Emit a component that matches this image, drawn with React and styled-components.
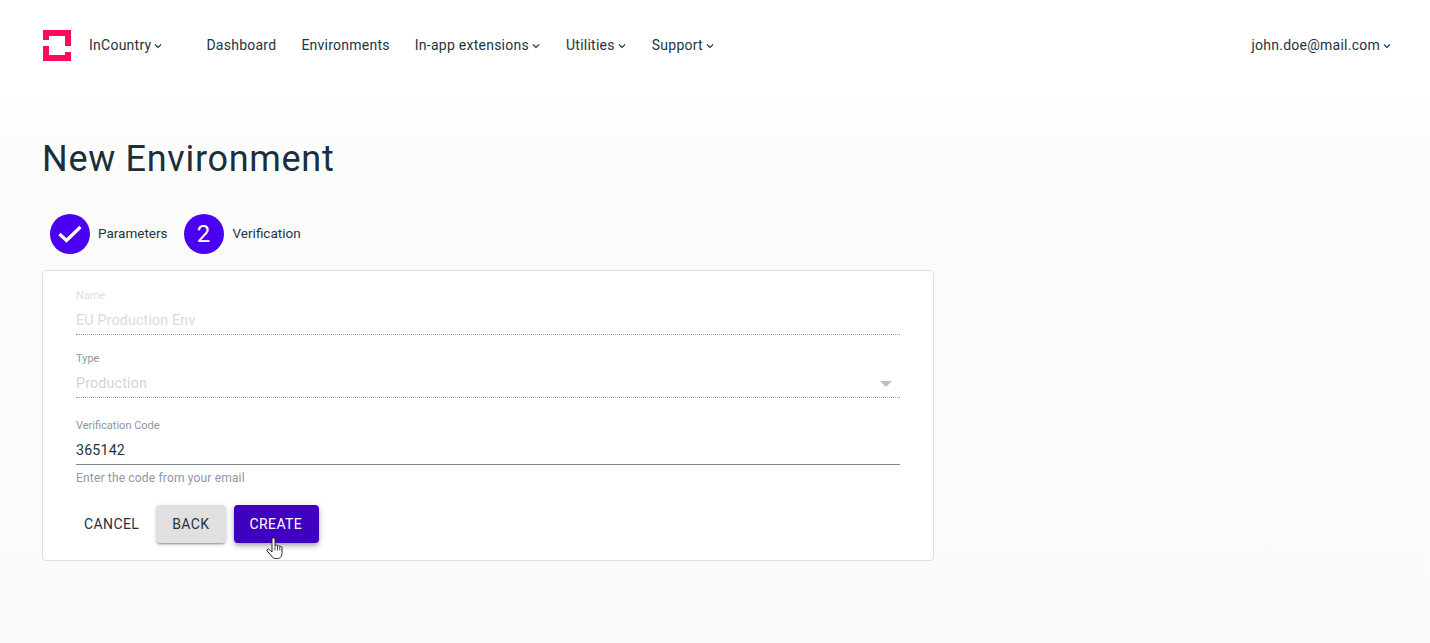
import React from "react";
import styled, { createGlobalStyle } from "styled-components";

const Global = createGlobalStyle`
  html, body { margin: 0; padding: 0; }
  body {
    font-family: Roboto, "Liberation Sans", sans-serif;
    color: #1f3340;
    background: #fafaf9;
  }
`;
const Page = styled.div`
  height: 643px;
  overflow: hidden;
  background: linear-gradient(to bottom, #ffffff 0, #ffffff 90px, #fbfbfa 170px, #fafaf9 100%);
`;
const Header = styled.header`
  display: flex;
  align-items: center;
  height: 90px;
  padding: 0 39px 0 43px;
`;
const Logo = styled.svg`
  width: 28px;
  height: 31px;
  margin-right: 18px;
  flex: none;
`;
const NavItem = styled.span`
  display: inline-flex;
  align-items: center;
  gap: 3px;
  font-size: 14px;
  letter-spacing: 0.25px;
  color: #1f3340;
  margin-right: ${(p) => p.$gap ?? 25}px;
  white-space: nowrap;
`;
const Spacer = styled.div`
  flex: 1;
`;
const Main = styled.main`
  padding: 0 0 0 42px;
`;
const Title = styled.h1`
  margin: 0;
  padding-top: 46px;
  font-size: 36px;
  line-height: 46px;
  font-weight: 400;
  letter-spacing: 0.7px;
  color: #1a2f3b;
`;
const Stepper = styled.div`
  display: flex;
  align-items: center;
  margin-top: 32px;
  padding-left: 8px;
  gap: 16px;
`;
const Step = styled.div`
  display: flex;
  align-items: center;
  gap: ${(p) => p.$gap ?? 8}px;
  font-size: 13.5px;
  color: #1f3340;
`;
const StepText = styled.span`
  padding-bottom: 2px;
`;
const Circle = styled.div`
  width: 40px;
  height: 40px;
  border-radius: 50%;
  background: #4b00f2;
  color: #fff;
  font-size: 24px;
  display: flex;
  align-items: center;
  justify-content: center;
`;
const Card = styled.section`
  box-sizing: border-box;
  width: 892px;
  height: 291px;
  margin-top: 16px;
  padding: 17px 33px 0;
  background: #fff;
  border: 1px solid #d9e2ea;
  border-radius: 4px;
`;
const Field = styled.div`
  position: relative;
  height: ${(p) => p.$h}px;
`;
const Label = styled.div`
  font-size: 11px;
  line-height: 16px;
  height: 16px;
  color: ${(p) => p.$color};
`;
const Value = styled.div`
  font-size: 14.2px;
  line-height: 20px;
  margin-top: 6px;
  padding-bottom: 4px;
  letter-spacing: 0.2px;
  color: ${(p) => p.$color};
  border-bottom: 1px ${(p) => p.$line} ${(p) => p.$lineColor};
`;
const Caret = styled.div`
  position: absolute;
  right: 8px;
  top: 30px;
  width: 0;
  height: 0;
  border-left: 6px solid transparent;
  border-right: 6px solid transparent;
  border-top: 6px solid #bdbdbd;
`;
const Help = styled.div`
  font-size: 12px;
  letter-spacing: 0.17px;
  line-height: 16px;
  margin-top: 5px;
  color: #8d989f;
`;
const Actions = styled.div`
  display: flex;
  align-items: center;
  margin-top: 7px;
  gap: 8px;
`;
const Button = styled.button`
  position: relative;
  height: 38px;
  padding: 0 ${(p) => p.$padR ?? 16}px 0 ${(p) => p.$padL ?? 16}px;
  border: 0;
  border-radius: 4px;
  font-family: inherit;
  font-size: 14px;
  letter-spacing: 0.4px;
  text-transform: uppercase;
  color: ${(p) => p.$fg};
  background: ${(p) => p.$bg};
  box-shadow: ${(p) => p.$shadow};
`;
const Cursor = styled.svg`
  position: absolute;
  left: 32px;
  top: 32px;
  width: 17px;
  height: 22px;
`;

const raised = "0 3px 1px -2px rgba(0,0,0,.2), 0 2px 2px 0 rgba(0,0,0,.14), 0 1px 5px 0 rgba(0,0,0,.12)";
const raisedHover = "0 2px 4px -1px rgba(0,0,0,.2), 0 4px 5px 0 rgba(0,0,0,.14), 0 1px 10px 0 rgba(0,0,0,.12)";

const Chevron = () => (
  <svg width="8" height="6" viewBox="0 0 8 6" fill="none" stroke="#1f3340" strokeWidth="1.1" style={{ marginTop: 2 }}>
    <path d="M1 1.5 L4 4.5 L7 1.5" />
  </svg>
);

export default function App() {
  return (
    <Page>
      <Global />
      <Header>
        <Logo viewBox="0 0 28 31">
          <path fill="#ff0a5a" d="M0 0H28V16H22V6H6V10H0Z" />
          <path fill="#ff0a5a" d="M0 16H6V25H22V22H28V31H0Z" />
        </Logo>
        <NavItem $gap={44}>InCountry <Chevron /></NavItem>
        <NavItem>Dashboard</NavItem>
        <NavItem>Environments</NavItem>
        <NavItem $gap={26}>In-app extensions <Chevron /></NavItem>
        <NavItem $gap={26}>Utilities <Chevron /></NavItem>
        <NavItem $gap={0}>Support <Chevron /></NavItem>
        <Spacer />
        <NavItem $gap={0}>john.doe@mail.com <Chevron /></NavItem>
      </Header>
      <Main>
        <Title>New Environment</Title>
        <Stepper>
          <Step>
            <Circle>
              <svg width="24" height="24" viewBox="0 0 24 24" fill="none" stroke="#fff" strokeWidth="3.2">
                <path d="M1.5 12 L8.5 18.5 L22.5 5" />
              </svg>
            </Circle>
            <StepText>Parameters</StepText>
          </Step>
          <Step $gap={9}>
            <Circle>2</Circle>
            <StepText>Verification</StepText>
          </Step>
        </Stepper>
        <Card>
          <Field $h={63}>
            <Label $color="#dcdfe1">Name</Label>
            <Value $color="#d8dbdd" $line="dotted" $lineColor="#9a9a9a">EU Production Env</Value>
          </Field>
          <Field $h={67}>
            <Label $color="#8f9a9f">Type</Label>
            <Value $color="#d0d4d6" $line="dotted" $lineColor="#9a9a9a">Production</Value>
            <Caret />
          </Field>
          <Field $h={80}>
            <Label $color="#8d989f">Verification Code</Label>
            <Value $color="#1f3340" $line="solid" $lineColor="#7d868b">365142</Value>
            <Help>Enter the code from your email</Help>
          </Field>
          <Actions>
            <Button $padL={8} $padR={9} $fg="#1f3340" $bg="transparent" $shadow="none">Cancel</Button>
            <Button $fg="#1f3340" $bg="#e0e0e0" $shadow={raised}>Back</Button>
            <Button $padR={17} $fg="#fff" $bg="#4000bf" $shadow={raisedHover}>
              Create
              <Cursor viewBox="0 0 17 22">
                <path fill="#fff" stroke="#222" strokeWidth="1" strokeLinejoin="round" d="M6 2 C6 .5 9 .5 9 2 V8.5 C10 7.8 11.2 8 11.5 9 C12.5 8.3 13.6 8.6 13.8 9.7 C14.8 9.2 16 9.7 16 11 V15.5 C16 19 14.5 21.5 11.5 21.5 H9.5 C7.5 21.5 6.5 20.5 5.5 19 L1.2 14 C.3 12.6 2 11.3 3.3 12.5 L6 15 Z" />
                <path stroke="#222" strokeWidth=".8" fill="none" d="M9 8.5V13.5M11.5 9V13.5M13.8 9.7V13.5" />
              </Cursor>
            </Button>
          </Actions>
        </Card>
      </Main>
    </Page>
  );
}
